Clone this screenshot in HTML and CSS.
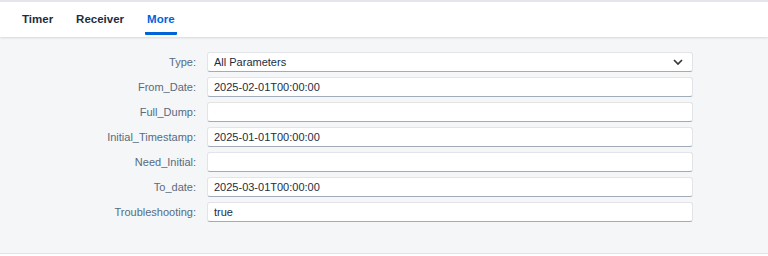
FILE: index.html
```html
<!DOCTYPE html>
<html lang="en">
<head>
    <meta charset="UTF-8">
    <title>Parameters</title>
    <link rel="stylesheet" href="styles.css">
</head>
<body>
    <div class="tab-bar">
        <div class="tab">Timer</div>
        <div class="tab">Receiver</div>
        <div class="tab active">More</div>
    </div>

    <div class="form-area">
        <div class="form-grid">
            <label class="field-label">Type:</label>
            <div class="field-input select">
                <span>All Parameters</span>
                <svg class="chevron" width="10" height="6" viewBox="0 0 10 6">
                    <path d="M1 1 L5 5 L9 1" fill="none" stroke="#32363a" stroke-width="1.7"/>
                </svg>
            </div>

            <label class="field-label">From_Date:</label>
            <div class="field-input">2025-02-01T00:00:00</div>

            <label class="field-label">Full_Dump:</label>
            <div class="field-input"></div>

            <label class="field-label">Initial_Timestamp:</label>
            <div class="field-input">2025-01-01T00:00:00</div>

            <label class="field-label">Need_Initial:</label>
            <div class="field-input"></div>

            <label class="field-label">To_date:</label>
            <div class="field-input">2025-03-01T00:00:00</div>

            <label class="field-label">Troubleshooting:</label>
            <div class="field-input">true</div>
        </div>
    </div>
</body>
</html>
```

FILE: styles.css
```css
* {
    margin: 0;
    padding: 0;
    box-sizing: border-box;
}

body {
    font-family: "Liberation Sans", Arial, sans-serif;
    background: #fff;
    color: #1d2d3e;
    width: 768px;
    height: 256px;
}

.tab-bar {
    display: flex;
    height: 37px;
    border-top: 2px solid #e4e6e9;
    background: #fff;
    padding-left: 22px;
    box-shadow: 0 1px 2px rgba(0, 0, 0, 0.12);
    position: relative;
}

.tab {
    font-size: 11.5px;
    font-weight: bold;
    color: #1d2d3e;
    padding-top: 11px;
    margin-right: 23px;
    height: 33px;
}

.tab.active {
    color: #0064d9;
    border-bottom: 3px solid #0064d9;
    border-radius: 0 0 1px 1px;
    padding-left: 2px;
    padding-right: 2px;
    margin-left: -2px;
}

.form-area {
    background: #f5f6f7;
    height: 217px;
    border-bottom: 1px solid #e1e3e6;
    padding-top: 15px;
}

.form-grid {
    display: grid;
    grid-template-columns: 196px 486px;
    column-gap: 11px;
    row-gap: 5px;
    align-items: center;
}

.field-label {
    text-align: right;
    font-size: 11px;
    color: #556b82;
}

.field-input {
    height: 20px;
    background: #fff;
    border: 1px solid #e2e4e7;
    border-bottom: 1px solid #a1acb9;
    border-radius: 3px;
    font-size: 11px;
    color: #1d2d3e;
    padding: 0 6px;
    display: flex;
    align-items: center;
}

.select {
    justify-content: space-between;
}

.chevron {
    margin-right: 3px;
}
```
